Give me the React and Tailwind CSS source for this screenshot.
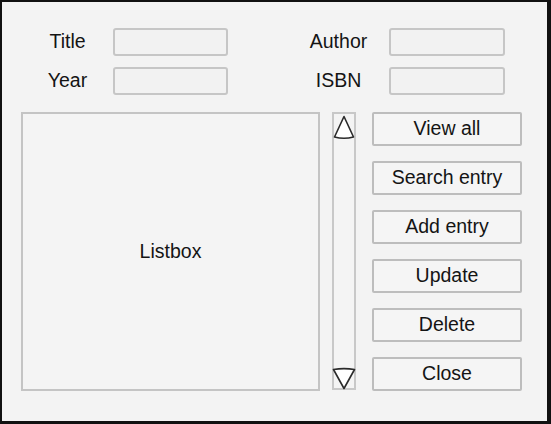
import React from "react";

const font = { fontFamily: '"Liberation Sans", Arial, sans-serif' };

function Up() {
  return (
    <svg width="22" height="25" viewBox="0 0 22 25" className="block">
      <path
        d="M11 1.5 L20.5 22 Q11 24.5 1.5 22 Z"
        fill="#ffffff"
        stroke="#2a2a2a"
        strokeWidth="1.6"
        strokeLinejoin="round"
      />
    </svg>
  );
}

function Down() {
  return (
    <svg width="24" height="23" viewBox="0 0 24 23" className="block">
      <path
        d="M1.5 2.5 Q12 0.8 22.5 2.5 L12 21.5 Z"
        fill="#ffffff"
        stroke="#2a2a2a"
        strokeWidth="1.6"
        strokeLinejoin="round"
      />
    </svg>
  );
}

function Field({ w }) {
  return (
    <div
      className={`${w} h-[28px] border-2 border-[#c6c6c6] rounded-[3px] bg-[#f2f2f2]`}
    />
  );
}

function Btn({ children }) {
  return (
    <div className="w-[150px] h-[34px] border-2 border-[#bdbdbd] rounded-[2px] bg-[#f5f5f5] flex items-center justify-center text-[19.5px] leading-none text-[#141414]">
      {children}
    </div>
  );
}

export default function App() {
  return (
    <div
      style={font}
      className="w-[551px] h-[424px] border-t-2 border-l-2 border-r-4 border-b-[3px] border-[#111111] bg-[#f3f3f3] text-[#141414]"
    >
      <div className="pt-[26px] pl-[20px]">
        <div className="flex items-center h-[28px]">
          <div className="w-[91px] text-center text-[19.5px] leading-none">Title</div>
          <Field w="w-[115px]" />
          <div className="w-[60px]" />
          <div className="w-[101px] text-center text-[19.5px] leading-none">Author</div>
          <Field w="w-[116px]" />
        </div>
        <div className="flex items-center h-[28px] mt-[11px]">
          <div className="w-[91px] text-center text-[19.5px] leading-none">Year</div>
          <Field w="w-[115px]" />
          <div className="w-[60px]" />
          <div className="w-[101px] text-center text-[19.5px] leading-none">ISBN</div>
          <Field w="w-[116px]" />
        </div>
      </div>
      <div className="flex mt-[17px] pl-[19px]">
        <div className="w-[299px] h-[279px] border-2 border-[#c4c4c4] bg-[#f4f4f4] flex items-center justify-center text-[19.5px] leading-none">
          Listbox
        </div>
        <div className="ml-[12px] w-[24px] h-[278px] border-2 border-[#c8c8c8] bg-[#f4f4f4] flex flex-col items-center justify-between">
          <div className="mt-[1px]">
            <Up />
          </div>
          <div className="mb-[-2px]">
            <Down />
          </div>
        </div>
        <div className="ml-[16px] flex flex-col gap-[15px]">
          <Btn>View all</Btn>
          <Btn>Search entry</Btn>
          <Btn>Add entry</Btn>
          <Btn>Update</Btn>
          <Btn>Delete</Btn>
          <Btn>Close</Btn>
        </div>
      </div>
    </div>
  );
}
